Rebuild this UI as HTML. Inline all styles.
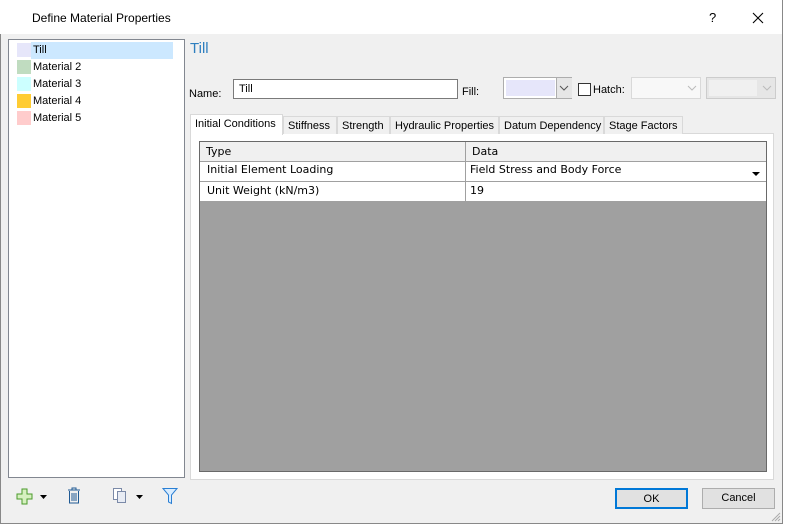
<!DOCTYPE html>
<html><head><style>
*{box-sizing:border-box;margin:0;padding:0}
body{width:785px;height:529px;background:#fff;font-family:"Liberation Sans",sans-serif;font-size:11px;color:#000;position:relative;overflow:hidden}
.a{position:absolute}
#dlg{left:0;top:0;width:783px;height:524px;background:#f0f0f0;border:1px solid #888;border-top:none}
#title{left:0;top:0;width:782px;height:34px;background:#fff}
.sw{position:absolute;left:8px;width:14px;height:14px}
.it{position:absolute;left:24px;font-size:11px}
.tab{position:absolute;top:116px;height:18px;border:1px solid #d9d9d9;border-bottom:none;background:#f0f0f0;padding:3px 4px 0;font-size:11px;white-space:nowrap}
.cell{position:absolute;height:20px;background:#fff;border-bottom:1px solid #a0a0a0;padding:3px 6px;font-family:"DejaVu Sans",sans-serif;font-size:11px;white-space:nowrap}
.btn{position:absolute;top:488px;height:21px;background:#e1e1e1;border:1px solid #adadad;text-align:center;line-height:19px;font-size:11px}
</style></head><body>
<div id="dlg" class="a"></div>
<div id="title" class="a"></div>
<div class="a" style="left:32px;top:11px;font-size:12px">Define Material Properties</div>
<div class="a" style="left:709px;top:10px;font-size:13px">?</div>
<svg class="a" style="left:752px;top:12px" width="12" height="12"><path d="M1 1L11 11M11 1L1 11" stroke="#000" stroke-width="1.1"/></svg>

<div class="a" style="left:8px;top:39px;width:177px;height:439px;background:#fff;border:1px solid #828790">
 <div class="a" style="left:22px;top:2px;width:142px;height:17px;background:#cce8ff"></div>
 <div class="sw" style="top:3px;background:#e6e6fa"></div><div class="it" style="top:4px">Till</div>
 <div class="sw" style="top:20px;background:#c0dcc0"></div><div class="it" style="top:21px">Material 2</div>
 <div class="sw" style="top:37px;background:#ccffff"></div><div class="it" style="top:38px">Material 3</div>
 <div class="sw" style="top:54px;background:#ffcc33"></div><div class="it" style="top:55px">Material 4</div>
 <div class="sw" style="top:71px;background:#ffcccc"></div><div class="it" style="top:72px">Material 5</div>
</div>

<div class="a" style="left:190px;top:40px;font-size:15px;color:#2e7fbf">Till</div>
<div class="a" style="left:189px;top:88px">Name:</div>
<div class="a" style="left:233px;top:79px;width:225px;height:20px;background:#fff;border:1px solid #7a7a7a;padding:3px 5px">Till</div>
<div class="a" style="left:462px;top:86px">Fill:</div>
<div class="a" style="left:503px;top:77px;width:69px;height:22px;background:#fff;border:1px solid #adadad"><div class="a" style="left:2px;top:2px;width:49px;height:16px;background:#e6e6fa"></div><div class="a" style="left:52px;top:0;width:16px;height:20px;background:#e6e6e6;border-left:1px solid #adadad"></div><svg class="a" style="left:55px;top:7px" width="10" height="6"><path d="M1 1L5 5L9 1" stroke="#555" fill="none"/></svg></div>
<div class="a" style="left:578px;top:83px;width:13px;height:13px;background:#fff;border:1px solid #333"></div>
<div class="a" style="left:593px;top:84px">Hatch:</div>
<div class="a" style="left:631px;top:77px;width:70px;height:22px;background:#f8f8f8;border:1px solid #d9d9d9"><svg class="a" style="left:55px;top:7px" width="10" height="6"><path d="M1 1L5 5L9 1" stroke="#bbb" fill="none"/></svg></div>
<div class="a" style="left:706px;top:77px;width:70px;height:22px;background:#e6e6e6;border:1px solid #ccc"><div class="a" style="left:2px;top:2px;width:48px;height:16px;background:#f0f0f0"></div><svg class="a" style="left:55px;top:7px" width="10" height="6"><path d="M1 1L5 5L9 1" stroke="#bbb" fill="none"/></svg></div>

<div class="a" style="left:190px;top:133px;width:584px;height:347px;background:#fff;border:1px solid #d9d9d9"></div>
<div class="tab" style="left:283px;width:54px">Stiffness</div>
<div class="tab" style="left:337px;width:53px">Strength</div>
<div class="tab" style="left:390px;width:109px">Hydraulic Properties</div>
<div class="tab" style="left:499px;width:105px">Datum Dependency</div>
<div class="tab" style="left:604px;width:79px">Stage Factors</div>
<div class="tab" style="left:190px;top:114px;width:93px;height:21px;background:#fff;z-index:2">Initial Conditions</div>

<div class="a" style="left:199px;top:141px;width:568px;height:331px;background:#a0a0a0;border:1px solid #696969"></div>
<div class="cell" style="left:200px;top:142px;width:266px;background:#f0f0f0;border-right:1px solid #a0a0a0">Type</div>
<div class="cell" style="left:466px;top:142px;width:300px;background:#f0f0f0">Data</div>
<div class="cell" style="left:200px;top:162px;width:266px;border-right:1px solid #a0a0a0;padding-left:7px;padding-top:1px">Initial Element Loading</div>
<div class="cell" style="left:466px;top:162px;width:300px;padding-left:4px;padding-top:1px">Field Stress and Body Force</div>
<svg class="a" style="left:752px;top:172px" width="8" height="4"><path d="M0 0H8L4 4Z" fill="#000"/></svg>
<div class="cell" style="left:200px;top:182px;width:266px;border-right:1px solid #a0a0a0;padding-left:7px;padding-top:2px">Unit Weight (kN/m3)</div>
<div class="cell" style="left:466px;top:182px;width:300px;padding-left:4px;padding-top:2px">19</div>

<svg class="a" style="left:15px;top:487px" width="22" height="20"><path d="M7 2H12V7H17V12H12V17H7V12H2V7H7Z" fill="#d6f0c0" stroke="#4a9a2a"/></svg>
<svg class="a" style="left:40px;top:495px" width="7" height="4"><path d="M0 0H7L3.5 4Z" fill="#000"/></svg>
<svg class="a" style="left:66px;top:487px" width="16" height="18"><path d="M2 3H14M6 3V1H10V3M3.5 4V16H12.5V4M6 6V14M8 6V14M10 6V14" stroke="#1f5a94" fill="none"/></svg>
<svg class="a" style="left:112px;top:487px" width="18" height="18"><rect x="1.5" y="1.5" width="8" height="11" fill="#fff" stroke="#7b8aa8"/><rect x="5.5" y="4.5" width="8" height="11" fill="#e8ecf4" stroke="#7b8aa8"/></svg>
<svg class="a" style="left:136px;top:495px" width="7" height="4"><path d="M0 0H7L3.5 4Z" fill="#000"/></svg>
<svg class="a" style="left:162px;top:487px" width="16" height="18"><path d="M1 1.5H15L9.5 8V16.5L6.5 15V8Z" fill="#d8ecff" stroke="#2a7fd4"/></svg>

<div class="btn" style="left:615px;width:73px;border:2px solid #0078d7">OK</div>
<div class="btn" style="left:702px;width:73px">Cancel</div>
<svg class="a" style="left:770px;top:511px" width="11" height="11"><path d="M10 2L2 10M10 5L5 10M10 8L8 10" stroke="#aaa"/></svg>
</body></html>
